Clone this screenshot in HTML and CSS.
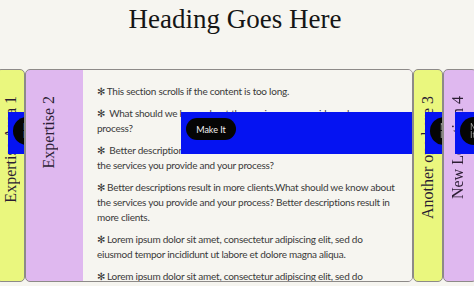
FILE: index.html
```html
<!DOCTYPE html>
<html lang="en">
<head>
<meta charset="utf-8">
<title>Heading Goes Here</title>
<link rel="stylesheet" href="styles.css">
</head>
<body>
<header class="page-header">
  <h1 class="title">Heading Goes Here</h1>
</header>
<main class="accordion">
  <section class="panel panel--yellow panel--first">
    <div class="tab"><span class="tab-label">Expertise Area 1</span></div>
    <div class="cta"><button class="cta-btn cta-btn--round">Make It</button></div>
  </section>
  <section class="panel panel--lilac panel--open">
    <div class="tab tab--open"><span class="tab-label">Expertise 2</span></div>
    <div class="content">
      <p>✻ This section scrolls if the content is too long.</p>
      <p>✻&nbsp; What should we know about the services you provide and your process?</p>
      <p>✻&nbsp; Better descriptions result in more clients.What should we know about the services you provide and your process?</p>
      <p>✻ Better descriptions result in more clients.What should we know about the services you provide and your process? Better descriptions result in more clients.</p>
      <p>✻ Lorem ipsum dolor sit amet, consectetur adipiscing elit, sed do eiusmod tempor incididunt ut labore et dolore magna aliqua.</p>
      <p>✻ Lorem ipsum dolor sit amet, consectetur adipiscing elit, sed do eiusmod tempor incididunt ut labore et dolore magna aliqua.</p>
    </div>
    <div class="cta cta--open"><button class="cta-btn">Make It</button></div>
  </section>
  <section class="panel panel--yellow">
    <div class="tab"><span class="tab-label">Another one here 3</span></div>
    <div class="cta"><button class="cta-btn cta-btn--round">Make It</button></div>
  </section>
  <section class="panel panel--lilac panel--last">
    <div class="tab"><span class="tab-label">New Location 4</span></div>
    <div class="cta"><button class="cta-btn cta-btn--round">Make It</button></div>
  </section>
</main>
</body>
</html>
```
FILE: styles.css
```css
html, body {
  margin: 0;
  padding: 0;
}
body {
  background: #f6f5f0;
  width: 474px;
  height: 286px;
  overflow: hidden;
}
.page-header {
  height: 69px;
  padding: 1px 4px 0 0;
  box-sizing: border-box;
}
.title {
  margin: 0;
  font-family: "Liberation Serif", "Times New Roman", serif;
  font-weight: 400;
  font-size: 27px;
  line-height: 36px;
  text-align: center;
  color: #151515;
}
.accordion {
  display: flex;
  height: 213px;
  margin-left: -4px;
}
.panel {
  position: relative;
  box-sizing: border-box;
  border: 1px solid #8d8a88;
  border-radius: 5px;
  overflow: hidden;
  display: flex;
  flex: none;
  width: 30px;
}
.panel--first { width: 29px; }
.panel--open { width: 388px; }
.panel--last { width: 34px; }
.panel--yellow { background: #eaf77e; }
.panel--lilac { background: #dfb8ef; }
.tab {
  flex: 1;
  display: flex;
  justify-content: center;
  align-items: flex-start;
  padding-top: 26px;
}
.tab--open {
  flex: none;
  width: 57px;
  box-sizing: border-box;
  justify-content: flex-start;
  padding-left: 13px;
}
.panel--last .tab { justify-content: flex-start; padding-left: 4px; }
.tab-label {
  writing-mode: vertical-rl;
  transform: rotate(180deg);
  font-family: "Liberation Serif", "Times New Roman", serif;
  font-size: 16px;
  line-height: 20px;
  color: #2b1d33;
  white-space: nowrap;
}
.content {
  flex: 1;
  background: #f6f5f0;
  overflow: auto;
  padding: 14px 13px 0 14px;
  font-family: Lato, "Open Sans", sans-serif;
  font-size: 10px;
  letter-spacing: -0.25px;
  line-height: 15px;
  color: #3a3a3a;
  scrollbar-width: none;
}
.content p {
  margin: 0 0 7px;
}
.cta {
  position: absolute;
  top: 42px;
  left: 11px;
  width: 300px;
  height: 42px;
  background: #0513f2;
}
.cta--open { left: 155px; }
.cta-btn {
  position: absolute;
  left: 5px;
  top: 6px;
  width: 50px;
  height: 22px;
  padding: 0;
  border: 0;
  border-radius: 11px;
  background: #050505;
  color: #f2f2f2;
  font-family: Lato, "Open Sans", sans-serif;
  font-size: 9px;
  cursor: pointer;
}
.cta-btn--round {
  top: 5px;
  width: 30px;
  height: 28px;
  border-radius: 14px;
  padding-left: 10px;
  line-height: 8px;
  color: #9a9a9a;
  text-align: left;
}
```
